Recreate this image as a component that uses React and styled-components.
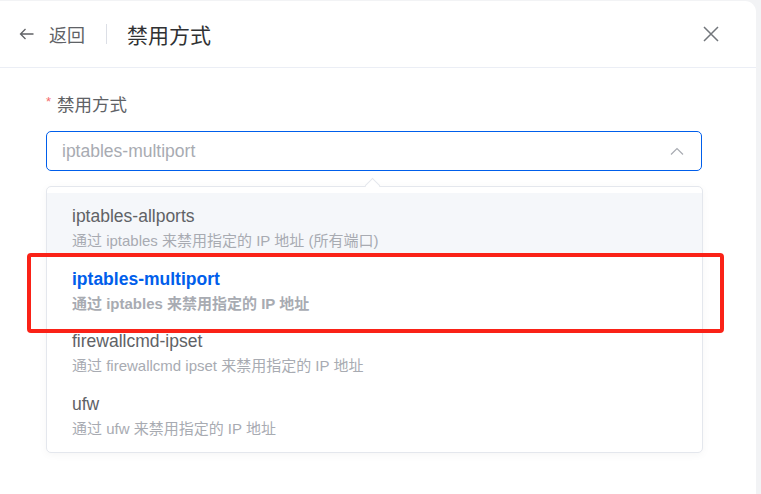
import styled, { createGlobalStyle } from "styled-components";

const GlobalStyle = createGlobalStyle`
  html, body {
    margin: 0;
    padding: 0;
    background: #f2f3f5;
    font-family: "Liberation Sans", "Noto Sans CJK SC", sans-serif;
  }
`;

const Page = styled.div`
  display: flex;
  height: 494px;
  overflow: hidden;
`;

const Drawer = styled.div`
  position: relative;
  width: 756px;
  margin-top: 1px;
  background: #ffffff;
  border-top-right-radius: 11px;
`;

const Header = styled.div`
  display: flex;
  align-items: center;
  height: 66px;
  padding: 0 37px 0 19px;
  border-bottom: 1px solid #ebeef5;
`;

const BackButton = styled.div`
  display: flex;
  align-items: center;
  gap: 15px;
  color: #606266;
  font-size: 18px;
`;

const Divider = styled.span`
  width: 1px;
  height: 20px;
  margin: 0 20px 0 21px;
  background: #dcdfe6;
`;

const Title = styled.h2`
  flex: 1;
  margin: 0;
  font-size: 21px;
  font-weight: 400;
  color: #303133;
`;

const Form = styled.div`
  padding: 25px 54px 0 46px;
`;

const Label = styled.div`
  display: flex;
  align-items: flex-start;
  line-height: 24px;
  font-size: 17.5px;
  color: #606266;
`;

const Star = styled.span`
  color: #f56c6c;
  font-size: 13px;
  line-height: 18px;
  margin-right: 6px;
`;

const SelectWrap = styled.div`
  position: relative;
  margin-top: 14px;
`;

const Input = styled.div`
  display: flex;
  align-items: center;
  justify-content: space-between;
  height: 38px;
  padding: 0 17px 0 15px;
  border: 1px solid #005eeb;
  border-radius: 5px;
  font-size: 17.5px;
  color: #a8abb2;
`;

const Dropdown = styled.div`
  position: absolute;
  top: calc(100% + 15px);
  left: 0;
  width: 655px;
  padding: 6px 0 9px;
  background: #ffffff;
  border: 1px solid #e4e7ed;
  border-radius: 5px;
  box-shadow: 0 2px 8px rgba(0, 0, 0, 0.04);
`;

const Caret = styled.span`
  position: absolute;
  top: -7px;
  left: 320px;
  width: 10px;
  height: 10px;
  background: #ffffff;
  border-top: 1px solid #e4e7ed;
  border-left: 1px solid #e4e7ed;
  transform: rotate(45deg);
`;

const Option = styled.div`
  padding: 11px 25px 4.5px;
  background: ${(p) => (p.$hover ? "#f5f7fa" : "transparent")};
`;

const OptionTitle = styled.div`
  line-height: 24px;
  font-size: 17.5px;
  font-weight: ${(p) => (p.$active ? 700 : 400)};
  color: ${(p) => (p.$active ? "#005eeb" : "#606266")};
`;

const OptionDesc = styled.div`
  margin-top: 3px;
  line-height: 20px;
  font-size: 15px;
  font-weight: ${(p) => (p.$active ? 700 : 400)};
  color: #a8abb2;
`;

const Highlight = styled.div`
  position: absolute;
  left: 27px;
  top: 252px;
  width: 689px;
  height: 72px;
  border: 4px solid #fa2217;
  border-radius: 4px;
  pointer-events: none;
`;

const Gutter = styled.div`
  flex: 1;
`;

const options = [
  { name: "iptables-allports", desc: "通过 iptables 来禁用指定的 IP 地址 (所有端口)" },
  { name: "iptables-multiport", desc: "通过 iptables 来禁用指定的 IP 地址" },
  { name: "firewallcmd-ipset", desc: "通过 firewallcmd ipset 来禁用指定的 IP 地址" },
  { name: "ufw", desc: "通过 ufw 来禁用指定的 IP 地址" },
];

const App = () => {
  const selected = "iptables-multiport";
  return (
    <Page>
      <GlobalStyle />
      <Drawer>
        <Header>
          <BackButton>
            <svg width="15" height="14" viewBox="0 0 15 14" fill="none" stroke="#606266" strokeWidth="1.3">
              <path d="M14.5 7H1.5M6.5 2L1.5 7l5 5" />
            </svg>
            返回
          </BackButton>
          <Divider />
          <Title>禁用方式</Title>
          <svg width="16" height="16" viewBox="0 0 16 16" fill="none" stroke="#72767b" strokeWidth="1.5">
            <path d="M1 1l14 14M15 1L1 15" />
          </svg>
        </Header>
        <Form>
          <Label>
            <Star>*</Star>
            禁用方式
          </Label>
          <SelectWrap>
            <Input>
              iptables-multiport
              <svg width="14" height="8" viewBox="0 0 14 8" fill="none" stroke="#a8abb2" strokeWidth="1.2">
                <path d="M1 7.5L7 1.5l6 6" />
              </svg>
            </Input>
            <Dropdown>
              <Caret />
              {options.map((o, i) => (
                <Option key={o.name} $hover={i === 0}>
                  <OptionTitle $active={o.name === selected}>{o.name}</OptionTitle>
                  <OptionDesc $active={o.name === selected}>{o.desc}</OptionDesc>
                </Option>
              ))}
            </Dropdown>
          </SelectWrap>
        </Form>
        <Highlight />
      </Drawer>
      <Gutter />
    </Page>
  );
};

export default App;
